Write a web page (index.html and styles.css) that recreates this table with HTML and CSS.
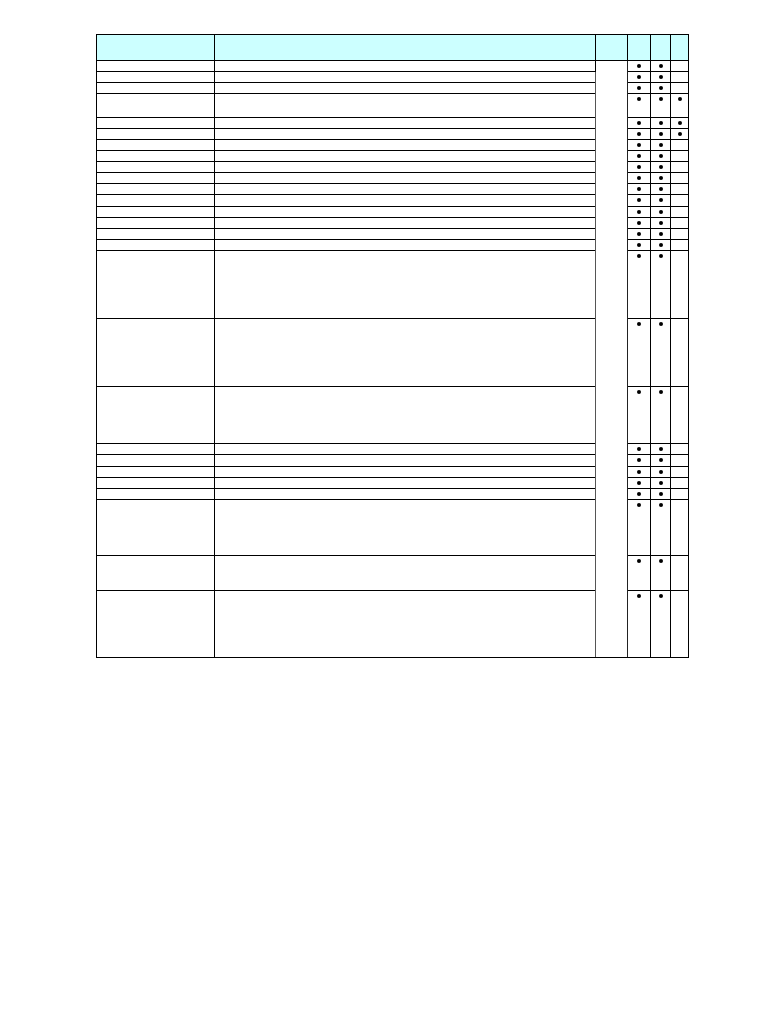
FILE: index.html
```html
<!DOCTYPE html>
<html>
<head>
<meta charset="utf-8">
<link rel="stylesheet" href="styles.css">
</head>
<body>
<table class="grid">
  <colgroup>
    <col class="c1"><col class="c2"><col class="c3"><col class="c4"><col class="c5"><col class="c6">
  </colgroup>
  <thead>
    <tr class="head"><th></th><th></th><th></th><th></th><th></th><th></th></tr>
  </thead>
  <tbody>
    <tr class="h11"><td></td><td></td><td class="merged" rowspan="27"></td><td><span class="dot"></span></td><td><span class="dot"></span></td><td></td></tr>
    <tr class="h11 g"><td></td><td></td><td><span class="dot"></span></td><td><span class="dot"></span></td><td></td></tr>
    <tr class="h11 g"><td></td><td></td><td><span class="dot"></span></td><td><span class="dot"></span></td><td></td></tr>
    <tr class="h24"><td></td><td></td><td><span class="dot"></span></td><td><span class="dot"></span></td><td><span class="dot"></span></td></tr>
    <tr class="h11"><td></td><td></td><td><span class="dot"></span></td><td><span class="dot"></span></td><td><span class="dot"></span></td></tr>
    <tr class="h11 g"><td></td><td></td><td><span class="dot"></span></td><td><span class="dot"></span></td><td><span class="dot"></span></td></tr>
    <tr class="h11"><td></td><td></td><td><span class="dot"></span></td><td><span class="dot"></span></td><td></td></tr>
    <tr class="h11"><td></td><td></td><td><span class="dot"></span></td><td><span class="dot"></span></td><td></td></tr>
    <tr class="h11 g"><td></td><td></td><td><span class="dot"></span></td><td><span class="dot"></span></td><td></td></tr>
    <tr class="h11"><td></td><td></td><td><span class="dot"></span></td><td><span class="dot"></span></td><td></td></tr>
    <tr class="h11 g"><td></td><td></td><td><span class="dot"></span></td><td><span class="dot"></span></td><td></td></tr>
    <tr class="h12"><td></td><td></td><td><span class="dot"></span></td><td><span class="dot"></span></td><td></td></tr>
    <tr class="h11 g"><td></td><td></td><td><span class="dot"></span></td><td><span class="dot"></span></td><td></td></tr>
    <tr class="h11"><td></td><td></td><td><span class="dot"></span></td><td><span class="dot"></span></td><td></td></tr>
    <tr class="h11 g"><td></td><td></td><td><span class="dot"></span></td><td><span class="dot"></span></td><td></td></tr>
    <tr class="h11"><td></td><td></td><td><span class="dot"></span></td><td><span class="dot"></span></td><td></td></tr>
    <tr class="h68 g"><td></td><td></td><td><span class="dot"></span></td><td><span class="dot"></span></td><td></td></tr>
    <tr class="h68"><td></td><td></td><td><span class="dot"></span></td><td><span class="dot"></span></td><td></td></tr>
    <tr class="h57"><td></td><td></td><td><span class="dot"></span></td><td><span class="dot"></span></td><td></td></tr>
    <tr class="h11 g"><td></td><td></td><td><span class="dot"></span></td><td><span class="dot"></span></td><td></td></tr>
    <tr class="h12"><td></td><td></td><td><span class="dot"></span></td><td><span class="dot"></span></td><td></td></tr>
    <tr class="h11 g"><td></td><td></td><td><span class="dot"></span></td><td><span class="dot"></span></td><td></td></tr>
    <tr class="h11"><td></td><td></td><td><span class="dot"></span></td><td><span class="dot"></span></td><td></td></tr>
    <tr class="h11 g"><td></td><td></td><td><span class="dot"></span></td><td><span class="dot"></span></td><td></td></tr>
    <tr class="h56 g"><td></td><td></td><td><span class="dot"></span></td><td><span class="dot"></span></td><td></td></tr>
    <tr class="h35"><td></td><td></td><td><span class="dot"></span></td><td><span class="dot"></span></td><td></td></tr>
    <tr class="h67"><td></td><td></td><td><span class="dot"></span></td><td><span class="dot"></span></td><td></td></tr>
  </tbody>
</table>
</body>
</html>
```

FILE: styles.css
```css
html, body {
  margin: 0;
  padding: 0;
  background: #ffffff;
}

body {
  font-family: "Liberation Sans", Arial, sans-serif;
  font-size: 0;
  line-height: 0;
}

.grid {
  margin: 34px 0 0 96px;
  width: 593px;
  border-collapse: collapse;
  table-layout: fixed;
  border-top: 1px solid #000;
  border-left: 1px solid #000;
  border-right: 1px solid #777;
  border-bottom: 1px solid #666;
}

.c1 { width: 118px; }
.c2 { width: 381px; }
.c3 { width: 32px; }
.c4 { width: 23px; }
.c5 { width: 20px; }
.c6 { width: 18px; }

.grid th,
.grid td {
  padding: 0;
  border: 1px solid #000;
  vertical-align: top;
  text-align: center;
}

.grid .head th {
  background: #ccffff;
  height: 25px;
}

.grid tr.g td {
  border-top-color: #777;
}

.grid td.merged {
  border-left-color: #555;
  border-right-color: #222;
}

.h11 { height: 11px; }
.h12 { height: 12px; }
.h24 { height: 24px; }
.h35 { height: 35px; }
.h56 { height: 56px; }
.h57 { height: 57px; }
.h67 { height: 67px; }
.h68 { height: 68px; }

.dot {
  display: block;
  width: 4px;
  height: 4px;
  margin: 3px auto 0;
  border-radius: 50%;
  background: #000;
}
```
